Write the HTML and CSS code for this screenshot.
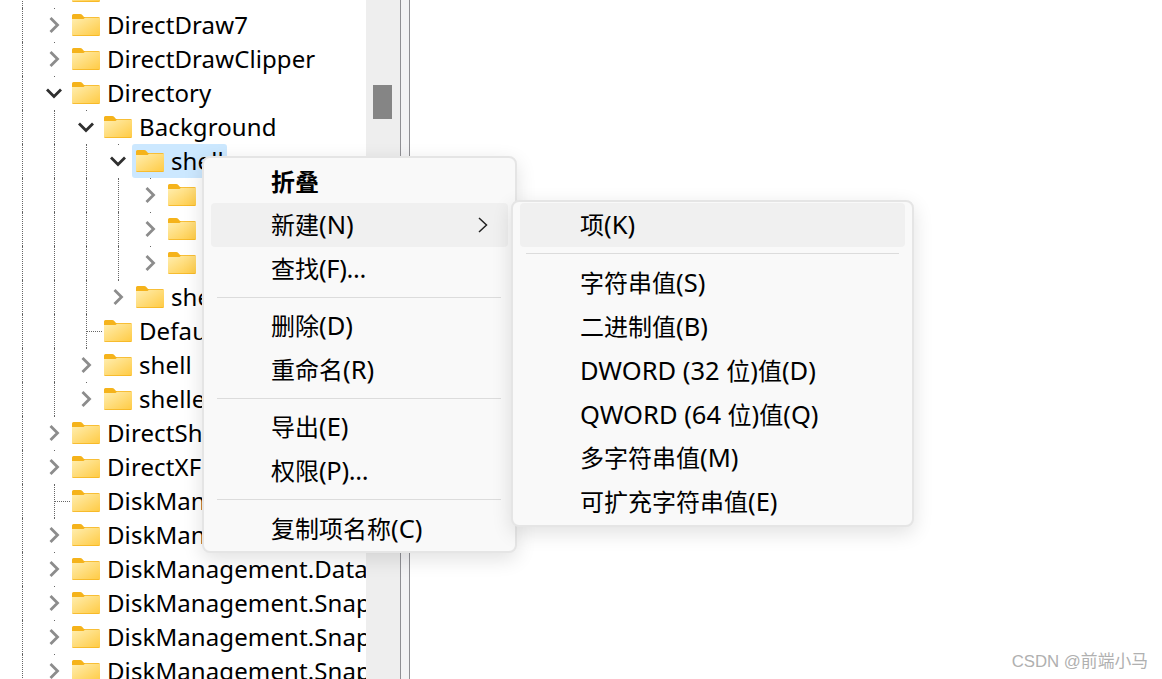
FILE: index.html
```html
<!DOCTYPE html>
<html lang="zh-CN">
<head>
    <meta charset="UTF-8">
    <title>注册表编辑器</title>
    <link rel="stylesheet" href="styles.css">
</head>
<body>
    <svg class="defs" width="0" height="0">
        <defs>
            <linearGradient id="folder-fill" x1="0" y1="0" x2="1" y2="1">
                <stop offset="0" stop-color="#ffeeb0"/>
                <stop offset="1" stop-color="#ffcb45"/>
            </linearGradient>
            <symbol id="folder" viewBox="0 0 28 22">
                <path d="M0 1.5Q0 0 1.5 0H8Q9.5 0 10.5 1.2L12 3H26.5Q28 3 28 4.5V20.5Q28 22 26.5 22H1.5Q0 22 0 20.5Z" fill="#f5b31b"/>
                <path d="M0 5H11.5L13 3.8H27.3Q28 3.8 28 4.6V20.5Q28 21.2 27.3 21.2H0.7Q0 21.2 0 20.5Z" fill="url(#folder-fill)"/>
            </symbol>
            <symbol id="closed" viewBox="0 0 16 16">
                <path d="M4.5 1L11.5 8L4.5 15" fill="none" stroke="#8c8c8c" stroke-width="2.8"/>
            </symbol>
            <symbol id="open" viewBox="0 0 16 16">
                <path d="M1 4.5L8 11.5L15 4.5" fill="none" stroke="#2f2f2f" stroke-width="2.8"/>
            </symbol>
        </defs>
    </svg>

    <div class="janela">
        <div class="arvore">
            <div class="linha"><i class="guia"></i><span class="seta"><svg><use href="#closed"/></svg></span><svg class="pasta"><use href="#folder"/></svg><span class="nome">DirectDraw</span></div>
            <div class="linha"><i class="guia"></i><span class="seta"><svg><use href="#closed"/></svg></span><svg class="pasta"><use href="#folder"/></svg><span class="nome">DirectDraw7</span></div>
            <div class="linha"><i class="guia"></i><span class="seta"><svg><use href="#closed"/></svg></span><svg class="pasta"><use href="#folder"/></svg><span class="nome">DirectDrawClipper</span></div>
            <div class="linha"><i class="guia"></i><span class="seta"><svg><use href="#open"/></svg></span><svg class="pasta"><use href="#folder"/></svg><span class="nome">Directory</span></div>
            <div class="linha"><i class="guia"></i><i class="guia"></i><span class="seta"><svg><use href="#open"/></svg></span><svg class="pasta"><use href="#folder"/></svg><span class="nome">Background</span></div>
            <div class="linha"><i class="guia"></i><i class="guia"></i><i class="guia"></i><span class="seta"><svg><use href="#open"/></svg></span><span class="selecionado"><svg class="pasta"><use href="#folder"/></svg><span class="nome">shell</span></span></div>
            <div class="linha"><i class="guia"></i><i class="guia"></i><i class="guia"></i><i class="guia"></i><span class="seta"><svg><use href="#closed"/></svg></span><svg class="pasta"><use href="#folder"/></svg><span class="nome">cmd</span></div>
            <div class="linha"><i class="guia"></i><i class="guia"></i><i class="guia"></i><i class="guia"></i><span class="seta"><svg><use href="#closed"/></svg></span><svg class="pasta"><use href="#folder"/></svg><span class="nome">git</span></div>
            <div class="linha"><i class="guia"></i><i class="guia"></i><i class="guia"></i><i class="guia"></i><span class="seta"><svg><use href="#closed"/></svg></span><svg class="pasta"><use href="#folder"/></svg><span class="nome">vs</span></div>
            <div class="linha"><i class="guia"></i><i class="guia"></i><i class="guia"></i><span class="seta"><svg><use href="#closed"/></svg></span><svg class="pasta"><use href="#folder"/></svg><span class="nome">shellex</span></div>
            <div class="linha"><i class="guia"></i><i class="guia"></i><i class="guia tee"></i><svg class="pasta"><use href="#folder"/></svg><span class="nome">DefaultIcon</span></div>
            <div class="linha"><i class="guia"></i><i class="guia"></i><span class="seta"><svg><use href="#closed"/></svg></span><svg class="pasta"><use href="#folder"/></svg><span class="nome">shell</span></div>
            <div class="linha"><i class="guia"></i><i class="guia"></i><span class="seta"><svg><use href="#closed"/></svg></span><svg class="pasta"><use href="#folder"/></svg><span class="nome">shellex</span></div>
            <div class="linha"><i class="guia"></i><span class="seta"><svg><use href="#closed"/></svg></span><svg class="pasta"><use href="#folder"/></svg><span class="nome">DirectShow</span></div>
            <div class="linha"><i class="guia"></i><span class="seta"><svg><use href="#closed"/></svg></span><svg class="pasta"><use href="#folder"/></svg><span class="nome">DirectXFile</span></div>
            <div class="linha"><i class="guia"></i><i class="guia tee"></i><svg class="pasta"><use href="#folder"/></svg><span class="nome">DiskManagement</span></div>
            <div class="linha"><i class="guia"></i><span class="seta"><svg><use href="#closed"/></svg></span><svg class="pasta"><use href="#folder"/></svg><span class="nome">DiskManagement</span></div>
            <div class="linha"><i class="guia"></i><span class="seta"><svg><use href="#closed"/></svg></span><svg class="pasta"><use href="#folder"/></svg><span class="nome">DiskManagement.DataObject</span></div>
            <div class="linha"><i class="guia"></i><span class="seta"><svg><use href="#closed"/></svg></span><svg class="pasta"><use href="#folder"/></svg><span class="nome">DiskManagement.SnapIn</span></div>
            <div class="linha"><i class="guia"></i><span class="seta"><svg><use href="#closed"/></svg></span><svg class="pasta"><use href="#folder"/></svg><span class="nome">DiskManagement.SnapInAbout</span></div>
            <div class="linha"><i class="guia"></i><span class="seta"><svg><use href="#closed"/></svg></span><svg class="pasta"><use href="#folder"/></svg><span class="nome">DiskManagement.SnapInComponent</span></div>
        </div>
        <div class="rolagem"><div class="polegar"></div></div>
        <div class="divisor"></div>
    </div>

    <div class="menu menu-principal">
        <div class="item forte">折叠</div>
        <div class="item ativo">新建<span class="lat">(N)</span><svg class="mais" viewBox="0 0 10 16"><path d="M1 1L8.500 8L1 15" fill="none" stroke="#222" stroke-width="1.500"/></svg></div>
        <div class="item">查找<span class="lat pontos">(F)...</span></div>
        <div class="separador"></div>
        <div class="item">删除<span class="lat">(D)</span></div>
        <div class="item">重命名<span class="lat">(R)</span></div>
        <div class="separador"></div>
        <div class="item">导出<span class="lat">(E)</span></div>
        <div class="item">权限<span class="lat pontos">(P)...</span></div>
        <div class="separador"></div>
        <div class="item">复制项名称<span class="lat">(C)</span></div>
    </div>

    <div class="menu submenu">
        <div class="item ativo">项<span class="lat">(K)</span></div>
        <div class="separador"></div>
        <div class="item">字符串值<span class="lat">(S)</span></div>
        <div class="item">二进制值<span class="lat">(B)</span></div>
        <div class="item"><span class="lat">DWORD (32 </span>位<span class="lat">)</span>值<span class="lat">(D)</span></div>
        <div class="item"><span class="lat">QWORD (64 </span>位<span class="lat">)</span>值<span class="lat">(Q)</span></div>
        <div class="item">多字符串值<span class="lat">(M)</span></div>
        <div class="item">可扩充字符串值<span class="lat">(E)</span></div>
    </div>

    <div class="marca">CSDN @前端小马</div>
</body>
</html>
```

FILE: styles.css
```css
html, body {
    margin: 0;
    height: 100%;
    overflow: hidden;
    background: #fff;
}
body {
    font-family: "Noto Sans", "Noto Sans CJK SC", sans-serif;
    font-size: 24px;
    color: #000;
}
.defs {
    display: block;
    height: 0;
}
.janela {
    display: flex;
    height: 679px;
}
.arvore {
    width: 366px;
    flex: none;
    overflow: hidden;
    padding-left: 6px;
    box-sizing: border-box;
}
.linha {
    display: flex;
    align-items: center;
    height: 34px;
    white-space: nowrap;
}
.linha:first-child {
    margin-top: -26px;
}
.guia {
    flex: none;
    align-self: stretch;
    width: 16px;
    margin-left: 16px;
    border-left: 1px dotted #666;
    box-sizing: border-box;
}
.tee {
    display: flex;
    align-items: center;
}
.tee::after {
    content: "";
    flex: 1;
    border-top: 1px dotted #666;
}
.seta {
    flex: none;
    display: flex;
    align-items: center;
    justify-content: center;
    align-self: stretch;
    width: 32px;
    background: linear-gradient(#666, #666) 16px 0 / 1px 1px no-repeat;
}
.seta svg {
    width: 16px;
    height: 16px;
}
.pasta {
    flex: none;
    width: 28px;
    height: 22px;
    margin-left: 2px;
}
.nome {
    margin-left: 7px;
    line-height: 34px;
    letter-spacing: 0.1px;
}
.selecionado {
    display: flex;
    align-items: center;
    height: 34px;
    padding-right: 3px;
    margin-left: -2px;
    padding-left: 2px;
    background: #cce8ff;
    border-radius: 3px;
}
.rolagem {
    width: 34px;
    flex: none;
    background: #eeeeee;
    padding: 85px 7px 0;
    box-sizing: border-box;
}
.polegar {
    width: 19px;
    height: 34px;
    background: #858585;
}
.divisor {
    width: 10px;
    flex: none;
    background: #f3f3f5;
    border-left: 1px solid #8f8f94;
    border-right: 1px solid #8f8f94;
    box-sizing: border-box;
}
.menu {
    position: absolute;
    box-sizing: border-box;
    background: #f9f9f9;
    border: 2px solid #e5e5e5;
    border-radius: 8px;
    box-shadow: 0 6px 20px rgba(0, 0, 0, 0.12);
}
.menu-principal {
    left: 202px;
    top: 156px;
    width: 315px;
    height: 397px;
    padding-top: 1.5px;
}
.submenu {
    left: 511px;
    top: 200px;
    width: 403px;
    height: 327px;
    padding-top: 1px;
}
.item {
    height: 43.8px;
    margin: 0 7px;
    padding: 0 20px 0 60px;
    border-radius: 4px;
    line-height: 43.8px;
    white-space: pre;
}
.lat {
    font-size: 25.5px;
}
.pontos {
    letter-spacing: -0.35px;
}
.ativo {
    background: #f0f0f0;
}
.forte {
    font-weight: 700;
}
.mais {
    float: right;
    width: 10px;
    height: 16px;
    margin-top: 14px;
}
.separador {
    height: 13.5px;
    margin: 0 14px 0 13px;
    padding-top: 6px;
    box-sizing: border-box;
}
.submenu .separador {
    height: 14.5px;
    margin: 0 13px;
}
.separador::before {
    content: "";
    display: block;
    border-top: 1px solid #dcdcdc;
}
.marca {
    position: absolute;
    right: 14px;
    top: 648px;
    font-family: "Liberation Sans", "Noto Sans CJK SC", sans-serif;
    font-size: 16.8px;
    color: #b0b0b0;
}
```
